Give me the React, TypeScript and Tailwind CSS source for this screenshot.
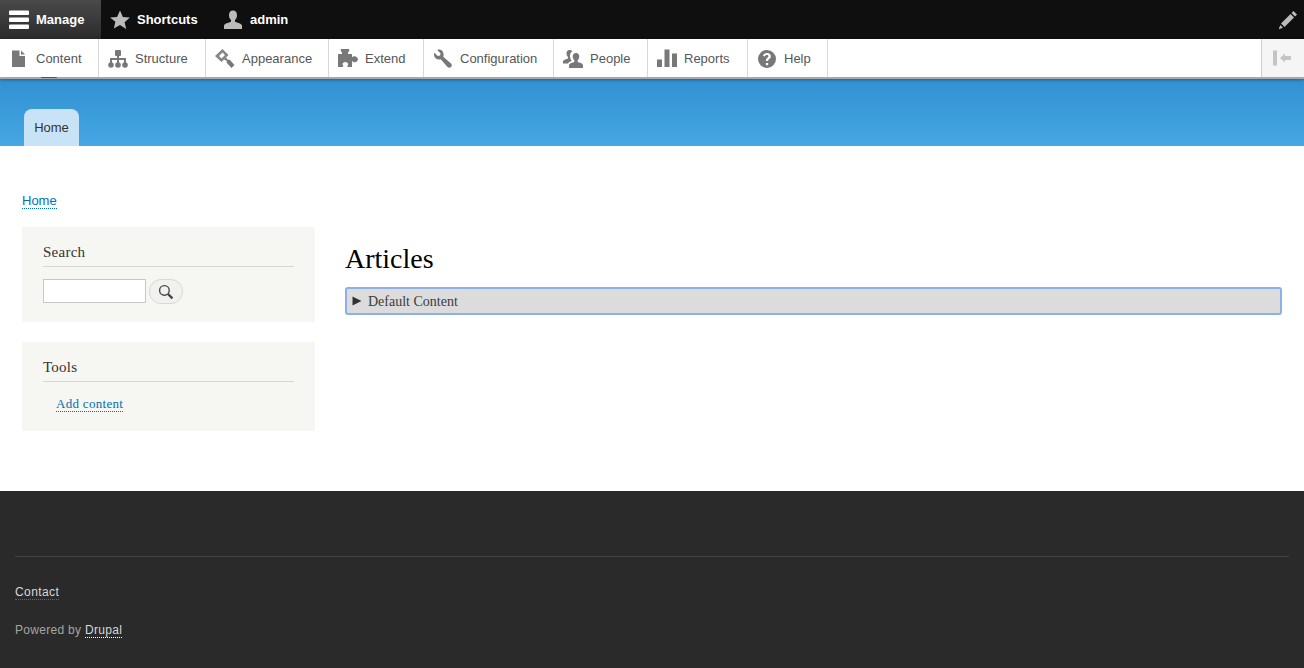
import type { ReactNode } from "react";

const sans = "font-['Liberation_Sans',Arial,sans-serif]";
const serif = "font-['Liberation_Serif','Times_New_Roman',serif]";

function Svg({ children, className }: { children: ReactNode; className?: string }) {
  return (
    <svg viewBox="0 0 20 20" className={className ?? "h-5 w-5 shrink-0"} fill="currentColor">
      {children}
    </svg>
  );
}

const PERSON =
  "M10 0.500c-2.600 0-4 2-4 4.800 0 2.100.8 3.700 2 4.600v1.900c-2 .8-6.500 1.700-7 3.700V19h18v-3.500c-.5-2-5-2.900-7-3.700V9.900c1.200-.9 2-2.500 2-4.600C14 2.500 12.600.5 10 .5z";

const trayItems: { label: string; width: string; icon: ReactNode }[] = [
  {
    label: "Content",
    width: "w-[99px]",
    icon: (
      <Svg>
        <path d="M3 1.500h7.500v5.500h5.500v11H3z" />
        <path d="M12 1.500l4 4h-4z" />
      </Svg>
    ),
  },
  {
    label: "Structure",
    width: "w-[107px]",
    icon: (
      <Svg>
        <rect x="7" y="1" width="6" height="6" rx="1" />
        <path d="M9 6h2v3h7v5h-2v-3h-5v3H9v-3H4v3H2V9h7z" />
        <circle cx="3" cy="16" r="2.800" />
        <circle cx="10" cy="16" r="2.800" />
        <circle cx="17" cy="16" r="2.800" />
      </Svg>
    ),
  },
  {
    label: "Appearance",
    width: "w-[123px]",
    icon: (
      <Svg>
        <path d="M7.500 0L0 7l6.500 6 7-7zM7.500 3.500l2.500 2.500-3.500 3.500L4 7z" fillRule="evenodd" opacity="0.9" />
        <path d="M9 10.500l2-2 2 2.500 1.500-.5 5 5.500-3 3-5-5.500.5-1.500z" />
      </Svg>
    ),
  },
  {
    label: "Extend",
    width: "w-[95px]",
    icon: (
      <Svg>
        <path d="M0 5h4V3.500L2.800 2V0h8.400v2L10 3.500V5h4v3.200c1-.9 2.200-1.200 3.500-.7 1.500.6 2.500 1.900 2.500 2.800 0 1.500-1.500 2.900-3 2.900-1 0-2-.4-3-1.300V18H9.500v-1.500c1-1 1-2-.2-2.800-1.200-.8-3-.8-4 0-1 .8-1 1.800-.2 2.800V18H0z" />
      </Svg>
    ),
  },
  {
    label: "Configuration",
    width: "w-[130px]",
    icon: (
      <Svg>
        <path d="M6 0.500c-.7 0-1.300.1-1.800.4L7.500 4.200l-.4 2.400-2.400.4L1.400 3.700C1.100 4.200 1 4.800 1 5.500c0 2.800 2.200 5 5 5 .6 0 1.200-.1 1.700-.3l6.800 7.800c1 1 2.600 1 3.500 0 1-1 1-2.500 0-3.500l-7.700-6.800c.2-.6.300-1.200.3-1.800C10.600 2.700 8.800.5 6 .5z" />
      </Svg>
    ),
  },
  {
    label: "People",
    width: "w-[94px]",
    icon: (
      <Svg>
        <path d="M6.500 1C4.500 1 3.500 2.500 3.500 4.500c0 1.500.6 2.700 1.500 3.400v1.600C3.500 10 .5 10.700 0 12v2.500h5c.5-1 2-1.800 3.500-2.400v-.8C7.500 10.300 7 8.700 7 7c0-2 .8-3.800 2.300-4.700C8.700 1.500 7.700 1 6.500 1z" />
        <path d="M13 4c-2.100 0-3.300 1.600-3.300 3.600 0 1.600.6 2.800 1.600 3.500v2c-1.600.6-4.800 1.300-5.300 2.800V19h14v-3.100c-.5-1.500-3.700-2.200-5.300-2.800v-2c1-.7 1.600-1.900 1.600-3.500C16.300 5.600 15.100 4 13 4z" />
      </Svg>
    ),
  },
  {
    label: "Reports",
    width: "w-[100px]",
    icon: (
      <Svg>
        <rect x="0" y="10.500" width="5" height="7.500" />
        <rect x="7.500" y="0.500" width="5" height="17.500" />
        <rect x="15" y="4.500" width="5" height="13.500" />
      </Svg>
    ),
  },
  {
    label: "Help",
    width: "w-[80px]",
    icon: (
      <Svg>
        <path
          fillRule="evenodd"
          d="M10 1a9 9 0 100 18 9 9 0 000-18zM8.900 14h2.300v2.200H8.900zM10 4c2.300 0 3.900 1.300 3.900 3.200 0 1.400-.8 2.200-1.700 2.900-.7.500-1 .9-1 1.900H8.900c0-1.700.5-2.500 1.500-3.200.7-.5 1-.9 1-1.500 0-.7-.6-1.200-1.500-1.200-1 0-1.600.5-1.900 1.400l-2-.8C6.600 5 8 4 10 4z"
        />
      </Svg>
    ),
  },
];

function Toolbar() {
  return (
    <div className={`${sans} text-[13px]`}>
      <div className="flex h-[39px] items-stretch justify-between bg-[#0f0f0f] font-bold text-white">
        <div className="flex">
          <a className="flex w-[101px] items-center gap-[7px] bg-gradient-to-b from-[#4a4a4a] to-[#2b2b2b] pl-[9px]">
            <svg viewBox="0 0 20 20" className="h-5 w-5 shrink-0" fill="currentColor">
              <rect x="0" y="0.500" width="20" height="4.500" rx="1" />
              <rect x="0" y="7.500" width="20" height="4.500" rx="1" />
              <rect x="0" y="14.500" width="20" height="4.500" rx="1" />
            </svg>
            Manage
          </a>
          <a className="flex w-[111px] items-center gap-[7px] pl-[9px]">
            <span className="text-[#bbbbbb]">
              <Svg>
                <path d="M10 0.500l2.900 6.500 7 .6-5.300 4.600 1.600 6.900L10 15l-6.200 3.600 1.600-6.900L.100 7.600l7-.6z" />
              </Svg>
            </span>
            Shortcuts
          </a>
          <a className="flex items-center gap-[7px] pl-[11px]">
            <span className="text-[#bbbbbb]">
              <Svg>
                <path d={PERSON} />
              </Svg>
            </span>
            admin
          </a>
        </div>
        <div className="mr-[6px] flex items-center text-[#bbbbbb]">
          <svg viewBox="0 0 20 20" className="h-5 w-5" fill="currentColor">
            <path d="M15.500 1l3.500 3.500-2 2L13.500 3zM12.500 4l3.500 3.500-9.500 9.500L3 13.500zM2.200 15l2.800 2.800L.8 19.200z" />
          </svg>
        </div>
      </div>
      <div className="relative flex h-[40px] items-stretch justify-between border-b-2 border-[#a8a8a8] bg-white text-[#565656] shadow-[0_1px_3px_rgba(0,0,0,0.35)]">
        <div className="flex">
          {trayItems.map((t) => (
            <a
              key={t.label}
              className={`flex ${t.width} items-center gap-[7px] border-r border-[#d9d9d9] pl-[9px] pt-[2px]`}
            >
              <span className="text-[#787878]">{t.icon}</span>
              {t.label}
            </a>
          ))}
        </div>
        <div className="flex w-[43px] items-center border-l border-[#cfcfcf] bg-[#f5f5f5] pl-[10px] text-[#c4c4c4]">
          <svg viewBox="0 0 20 16" className="h-4 w-5" fill="currentColor">
            <rect x="1" y="0.500" width="4" height="15" />
            <path d="M8 8l5-4.500V6h6v4h-6v2.500z" />
          </svg>
        </div>
        <span className="absolute left-[41px] top-full h-px w-[16px] rounded-b-full bg-[#2c5f82]" />
      </div>
    </div>
  );
}

function Block({ title, children, className }: { title: string; children: ReactNode; className?: string }) {
  return (
    <section className={`bg-[#f6f6f2] px-[21px] ${className ?? ""}`}>
      <h2 className="border-b border-[#d6d6d3] pb-[4px] text-[15px] leading-[19px] tracking-[0.25px] text-[#333333]">
        {title}
      </h2>
      {children}
    </section>
  );
}

export default function App() {
  return (
    <div className={`${serif} flex h-[668px] w-[1304px] flex-col overflow-hidden bg-white`}>
      <Toolbar />
      <header className="flex h-[67px] items-end bg-gradient-to-b from-[#3191d1] to-[#46a7e4] pl-[24px]">
        <a
          className={`${sans} flex h-[37px] w-[55px] items-center justify-center rounded-t-[8px] bg-[#c9e3f6] text-[13px] text-[#333333]`}
        >
          Home
        </a>
      </header>

      <div className="flex-1 px-[22px]">
        <div className={`${sans} mt-[47px] h-[34px] text-[13px] leading-[16px] text-[#0071b3]`}>
          <a className="border-b border-dotted border-[#0071b3]">Home</a>
        </div>
        <div className="flex">
          <aside className="w-[293px] shrink-0">
            <Block title="Search" className="h-[95px] pt-[16px]">
              <div className="mt-[12px] flex items-start gap-[3px]">
                <div className="h-[24px] w-[103px] border border-[#c8c8c8] bg-white" />
                <button
                  type="button"
                  className="flex h-[25px] w-[34px] items-center justify-center rounded-[12px] border border-[#d8d8d8] bg-[#f1f1ef] text-[#444444]"
                >
                  <svg viewBox="0 0 20 20" className="h-[16px] w-[16px]" fill="none" stroke="currentColor">
                    <circle cx="8" cy="8" r="6" strokeWidth="1.700" />
                    <path d="M12.500 12.500L18 18" strokeWidth="3" />
                  </svg>
                </button>
              </div>
            </Block>
            <Block title="Tools" className="mt-[20px] h-[89px] pt-[16px]">
              <div className="mt-[14px] pl-[13px] text-[13px] leading-[15px] tracking-[0.3px] text-[#0071b3]">
                <a className="border-b border-dotted border-[#0071b3]">Add content</a>
              </div>
            </Block>
          </aside>
          <main className="ml-[30px] flex-1">
            <h1 className="mt-[15px] text-[28px] leading-[34px] text-black">Articles</h1>
            <details className="mt-[11px] h-[28px] rounded-[3px] border-2 border-[#8cb0ea] bg-[#dcdcdc] text-[14px] text-[#3b3b3b]">
              <summary className="flex h-[24px] items-center pl-[5px]">
                <svg viewBox="0 0 10 10" className="mr-[6px] h-[10px] w-[10px] text-[#333333]" fill="currentColor">
                  <path d="M0.500 0.500l9 4.500-9 4.500z" />
                </svg>
                Default Content
              </summary>
            </details>
          </main>
        </div>
      </div>

      <footer className={`${sans} h-[177px] bg-[#2a2a2a] px-[15px] pt-[65px] text-[12px]`}>
        <div className="border-t border-[#444444]" />
        <div className="mt-[28px] leading-[15px] tracking-[0.4px] text-[#d8d8d8]">
          <a className="border-b border-dotted border-[#666666]">Contact</a>
        </div>
        <div className="mt-[23px] leading-[15px] tracking-[0.3px] text-[#a5a5a5]">
          Powered by <a className="border-b border-dotted border-white text-[#d8d8d8]">Drupal</a>
        </div>
      </footer>
    </div>
  );
}
